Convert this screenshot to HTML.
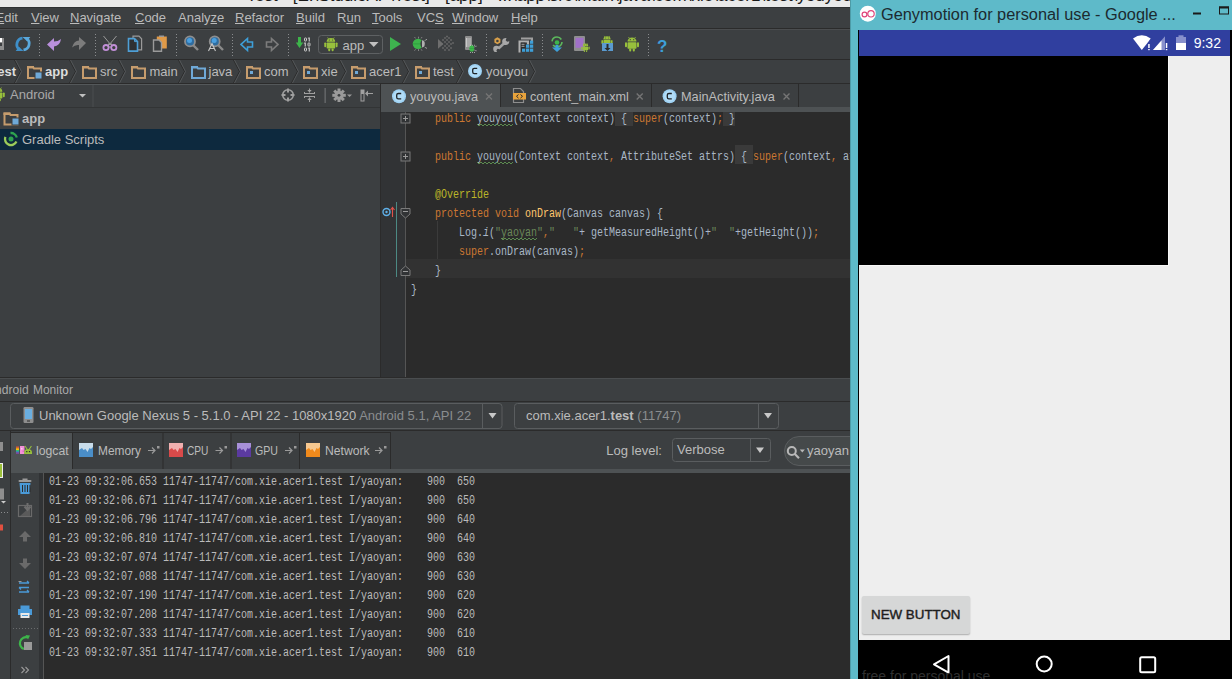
<!DOCTYPE html>
<html><head><meta charset="utf-8">
<style>
*{margin:0;padding:0;box-sizing:border-box}
html,body{width:1232px;height:679px;overflow:hidden;background:#3c3f41;font-family:"Liberation Sans",sans-serif;position:relative}
.a{position:absolute;display:block}
.t{position:absolute;white-space:pre}
.u{text-decoration:underline;text-underline-offset:1px}
</style></head><body>
<div class="a" style="left:0;top:0;width:850px;height:7px;background:#e9e9e9;overflow:hidden">
<div class="t" style="left:246.5px;top:-12.79px;font-size:17px;line-height:17px;color:#1a1a1a;font-weight:normal;font-family:'Liberation Sans',sans-serif;">Test - [E:\StudioAP\Test] - [app] - ...\app\src\main\java\com\xie\acer1\test\youyou.java - Android Studio 2.0</div>
</div>
<div class="a" style="left:0px;top:7px;width:850px;height:21px;background:#3c3f41;"></div>
<div class="a" style="left:0px;top:7px;width:850px;height:1px;background:#2f3133;"></div>
<div class="a" style="left:0px;top:28px;width:850px;height:1px;background:#2b2b2b;"></div>
<div class="a" style="left:0px;top:29px;width:850px;height:1px;background:#4b4d4f;"></div>
<div class="t" style="left:-4.5px;top:11.39px;font-size:13px;line-height:13px;color:#bbbbbb;font-weight:normal;font-family:'Liberation Sans',sans-serif;"><span class="u">E</span>dit</div>
<div class="t" style="left:31px;top:11.39px;font-size:13px;line-height:13px;color:#bbbbbb;font-weight:normal;font-family:'Liberation Sans',sans-serif;"><span class="u">V</span>iew</div>
<div class="t" style="left:70px;top:11.39px;font-size:13px;line-height:13px;color:#bbbbbb;font-weight:normal;font-family:'Liberation Sans',sans-serif;"><span class="u">N</span>avigate</div>
<div class="t" style="left:135px;top:11.39px;font-size:13px;line-height:13px;color:#bbbbbb;font-weight:normal;font-family:'Liberation Sans',sans-serif;"><span class="u">C</span>ode</div>
<div class="t" style="left:178px;top:11.39px;font-size:13px;line-height:13px;color:#bbbbbb;font-weight:normal;font-family:'Liberation Sans',sans-serif;">Analy<span class="u">z</span>e</div>
<div class="t" style="left:235px;top:11.39px;font-size:13px;line-height:13px;color:#bbbbbb;font-weight:normal;font-family:'Liberation Sans',sans-serif;"><span class="u">R</span>efactor</div>
<div class="t" style="left:296px;top:11.39px;font-size:13px;line-height:13px;color:#bbbbbb;font-weight:normal;font-family:'Liberation Sans',sans-serif;"><span class="u">B</span>uild</div>
<div class="t" style="left:337px;top:11.39px;font-size:13px;line-height:13px;color:#bbbbbb;font-weight:normal;font-family:'Liberation Sans',sans-serif;">R<span class="u">u</span>n</div>
<div class="t" style="left:372px;top:11.39px;font-size:13px;line-height:13px;color:#bbbbbb;font-weight:normal;font-family:'Liberation Sans',sans-serif;"><span class="u">T</span>ools</div>
<div class="t" style="left:417px;top:11.39px;font-size:13px;line-height:13px;color:#bbbbbb;font-weight:normal;font-family:'Liberation Sans',sans-serif;">VC<span class="u">S</span></div>
<div class="t" style="left:452px;top:11.39px;font-size:13px;line-height:13px;color:#bbbbbb;font-weight:normal;font-family:'Liberation Sans',sans-serif;"><span class="u">W</span>indow</div>
<div class="t" style="left:511px;top:11.39px;font-size:13px;line-height:13px;color:#bbbbbb;font-weight:normal;font-family:'Liberation Sans',sans-serif;"><span class="u">H</span>elp</div>
<div class="a" style="left:0px;top:30px;width:850px;height:29px;background:#3c3f41;"></div>
<div class="a" style="left:0px;top:59px;width:850px;height:1px;background:#2b2b2b;"></div>
<svg class="a" style="left:0px;top:30px;" width="850" height="29" viewBox="0 0 850 29"><rect x="0" y="8" width="4" height="12" fill="#8e8e8e"/><rect x="0" y="8" width="2" height="4" fill="#ffffff"/><rect x="0" y="13" width="2" height="3" fill="#3c3f41"/><path d="M22.5,8.2 A6.3,6.3 0 0 0 19.5,19.6" fill="none" stroke="#3e8fc9" stroke-width="2.8"/><path d="M23.5,19.8 A6.3,6.3 0 0 0 26.8,8.6" fill="none" stroke="#5aa8dc" stroke-width="2.8"/><path d="M22.5,7 h7.8 l-3.2,4.2z" fill="#5aa8dc"/><path d="M23.5,21 h-7.8 l3.2,-4.2z" fill="#3e8fc9"/><rect x="39" y="4" width="1" height="1" fill="#8a8c8e"/><rect x="39" y="7" width="1" height="1" fill="#8a8c8e"/><rect x="39" y="10" width="1" height="1" fill="#8a8c8e"/><rect x="39" y="13" width="1" height="1" fill="#8a8c8e"/><rect x="39" y="16" width="1" height="1" fill="#8a8c8e"/><rect x="39" y="19" width="1" height="1" fill="#8a8c8e"/><rect x="39" y="22" width="1" height="1" fill="#8a8c8e"/><rect x="39" y="25" width="1" height="1" fill="#8a8c8e"/><path d="M47,14.5 L54,8 L54,11.5 Q58,11.5 61,9 Q60,16 54,16.5 L54,21 Z" fill="#b98fdc"/><path d="M86,13 L79,7 L79,10.5 Q74,10.5 72,17.5 Q75,14.5 79,15 L79,20 Z" fill="#7c7c7c"/><rect x="95" y="4" width="1" height="1" fill="#8a8c8e"/><rect x="95" y="7" width="1" height="1" fill="#8a8c8e"/><rect x="95" y="10" width="1" height="1" fill="#8a8c8e"/><rect x="95" y="13" width="1" height="1" fill="#8a8c8e"/><rect x="95" y="16" width="1" height="1" fill="#8a8c8e"/><rect x="95" y="19" width="1" height="1" fill="#8a8c8e"/><rect x="95" y="22" width="1" height="1" fill="#8a8c8e"/><rect x="95" y="25" width="1" height="1" fill="#8a8c8e"/><line x1="103.5" y1="6" x2="111" y2="15" stroke="#9a9a9a" stroke-width="1"/><line x1="116.5" y1="6" x2="109" y2="15" stroke="#9a9a9a" stroke-width="1"/><rect x="108.5" y="14" width="3" height="3" fill="none" stroke="#9a9a9a" stroke-width="1"/><circle cx="106" cy="17.6" r="2.6" fill="none" stroke="#c28fd8" stroke-width="1.8"/><circle cx="113.8" cy="17.6" r="2.6" fill="none" stroke="#c28fd8" stroke-width="1.8"/><path d="M133,6.2 h6 l2.6,2.6 v11 h-8.6z" fill="#3c3f41" stroke="#9a9a9a" stroke-width="1.2"/><path d="M128.5,8.6 h6 l3,3 v9.5 h-9z" fill="#2f3133" stroke="#4e9fd6" stroke-width="1.6"/><path d="M134.5,8.6 v3 h3" fill="none" stroke="#4e9fd6" stroke-width="1"/><rect x="156.8" y="6.5" width="10" height="12" fill="#e09a48"/><rect x="159" y="5.5" width="5" height="1.5" fill="#9a9a9a"/><path d="M153.5,10 h5.5 l2.5,2.5 v8.8 h-8z" fill="#3c3f41" stroke="#9a9a9a" stroke-width="1.4"/><rect x="176" y="4" width="1" height="1" fill="#8a8c8e"/><rect x="176" y="7" width="1" height="1" fill="#8a8c8e"/><rect x="176" y="10" width="1" height="1" fill="#8a8c8e"/><rect x="176" y="13" width="1" height="1" fill="#8a8c8e"/><rect x="176" y="16" width="1" height="1" fill="#8a8c8e"/><rect x="176" y="19" width="1" height="1" fill="#8a8c8e"/><rect x="176" y="22" width="1" height="1" fill="#8a8c8e"/><rect x="176" y="25" width="1" height="1" fill="#8a8c8e"/><line x1="193" y1="15" x2="198" y2="20" stroke="#8a8a8a" stroke-width="2.4"/><circle cx="190" cy="11.4" r="5" fill="#2f6da0" stroke="#8e8e8e" stroke-width="1.8"/><circle cx="189.5" cy="10.5" r="2.5" fill="#4aa0e0"/><line x1="218" y1="15" x2="223" y2="20" stroke="#8a8a8a" stroke-width="2.4"/><circle cx="214.7" cy="11.4" r="5" fill="#2f6da0" stroke="#8e8e8e" stroke-width="1.8"/><circle cx="214.2" cy="10.5" r="2.5" fill="#4aa0e0"/><path d="M208.5,21 L212,13.5 L215.5,21 M210,18.5 h4" fill="none" stroke="#c8c8c8" stroke-width="1.1"/><rect x="232" y="4" width="1" height="1" fill="#8a8c8e"/><rect x="232" y="7" width="1" height="1" fill="#8a8c8e"/><rect x="232" y="10" width="1" height="1" fill="#8a8c8e"/><rect x="232" y="13" width="1" height="1" fill="#8a8c8e"/><rect x="232" y="16" width="1" height="1" fill="#8a8c8e"/><rect x="232" y="19" width="1" height="1" fill="#8a8c8e"/><rect x="232" y="22" width="1" height="1" fill="#8a8c8e"/><rect x="232" y="25" width="1" height="1" fill="#8a8c8e"/><path d="M241,14.4 L247.5,8.5 V12 H252.5 V17 H247.5 V20.5 Z" fill="none" stroke="#3e9fd8" stroke-width="1.6" stroke-linejoin="miter"/><path d="M278,14.4 L271.5,8.5 V12 H266.5 V17 H271.5 V20.5 Z" fill="none" stroke="#7c7c7c" stroke-width="1.6"/><rect x="288" y="4" width="1" height="1" fill="#8a8c8e"/><rect x="288" y="7" width="1" height="1" fill="#8a8c8e"/><rect x="288" y="10" width="1" height="1" fill="#8a8c8e"/><rect x="288" y="13" width="1" height="1" fill="#8a8c8e"/><rect x="288" y="16" width="1" height="1" fill="#8a8c8e"/><rect x="288" y="19" width="1" height="1" fill="#8a8c8e"/><rect x="288" y="22" width="1" height="1" fill="#8a8c8e"/><rect x="288" y="25" width="1" height="1" fill="#8a8c8e"/><rect x="298" y="7" width="3" height="6" fill="#3db54a"/><path d="M295.8,12.5 h7.4 l-3.7,5.5z" fill="#3db54a"/><rect x="304.5" y="8.0" width="2" height="3" rx="0.6" fill="none" stroke="#d0d0d0" stroke-width="1"/><rect x="308.7" y="7.5" width="1.1" height="4" fill="#d0d0d0"/><rect x="307.9" y="7.7" width="1" height="0.9" fill="#d0d0d0"/><rect x="304.7" y="12.5" width="1.1" height="4" fill="#d0d0d0"/><rect x="303.9" y="12.7" width="1" height="0.9" fill="#d0d0d0"/><rect x="308.0" y="13.0" width="2" height="3" rx="0.6" fill="none" stroke="#d0d0d0" stroke-width="1"/><rect x="304.5" y="18.0" width="2" height="3" rx="0.6" fill="none" stroke="#d0d0d0" stroke-width="1"/><rect x="308.7" y="17.5" width="1.1" height="4" fill="#d0d0d0"/><rect x="307.9" y="17.7" width="1" height="0.9" fill="#d0d0d0"/><rect x="318.5" y="5.5" width="64" height="18" rx="3" fill="#3c3f41" stroke="#5e6163" stroke-width="1"/><g transform="translate(323.8,7) scale(0.95)"><path d="M3,5 a4.5,4 0 0 1 9,0z" fill="#98c03c"/><line x1="4" y1="0.5" x2="5" y2="2" stroke="#98c03c" stroke-width="0.8"/><line x1="11" y1="0.5" x2="10" y2="2" stroke="#98c03c" stroke-width="0.8"/><circle cx="5.8" cy="3.2" r="0.6" fill="#3c3f41"/><circle cx="9.2" cy="3.2" r="0.6" fill="#3c3f41"/><rect x="3" y="5.7" width="9" height="6.5" rx="0.8" fill="#98c03c"/><rect x="0.5" y="5.7" width="2" height="5" rx="1" fill="#98c03c"/><rect x="12.5" y="5.7" width="2" height="5" rx="1" fill="#98c03c"/><rect x="4.7" y="12" width="2" height="3" rx="0.8" fill="#98c03c"/><rect x="8.3" y="12" width="2" height="3" rx="0.8" fill="#98c03c"/></g><text x="342.5" y="20" font-size="13" fill="#bbbbbb" font-family="Liberation Sans">app</text><path d="M369,12 h9.5 l-4.75,5z" fill="#c0c0c0"/><path d="M390,7 L401,14 L390,21z" fill="#3eb34f"/><ellipse cx="418" cy="13.85" rx="5.3" ry="5.2" fill="#3db54a"/><rect x="412.8" y="13.5" width="10" height="0.8" fill="#2f9a3c"/><ellipse cx="423.6" cy="13.85" rx="3.2" ry="4.2" fill="#3c3f41"/><path d="M422,10.3 a2.8,3.55 0 0 1 0,7.1 z" fill="#b0b0b0"/><path d="M424.8,10.8 q0.6,-1.2 2.2,-1.4 M424.8,16.9 q0.6,1.2 2.2,1.4" fill="none" stroke="#a0a0a0" stroke-width="1"/><path d="M414.5,7 l1,1.4 M418.5,6.7 v1.8 M422,7 l-0.8,1.4 M414.5,20.7 l1,-1.4 M418.5,21 v-1.8 M422,20.7 l-0.8,-1.4" fill="none" stroke="#8a8a8a" stroke-width="0.9"/><path d="M438,9 L443.5,14 L438,18.7z" fill="#6e6e6e"/><rect x="442.25" y="9.25" width="1.5" height="1.5" fill="#707070"/><rect x="444.25" y="7.25" width="1.5" height="1.5" fill="#707070"/><rect x="446.25" y="9.25" width="1.5" height="1.5" fill="#707070"/><rect x="444.25" y="11.25" width="1.5" height="1.5" fill="#707070"/><rect x="446.25" y="13.25" width="1.5" height="1.5" fill="#707070"/><rect x="448.25" y="11.25" width="1.5" height="1.5" fill="#707070"/><rect x="448.25" y="7.25" width="1.5" height="1.5" fill="#707070"/><rect x="450.25" y="9.25" width="1.5" height="1.5" fill="#707070"/><rect x="450.25" y="13.25" width="1.5" height="1.5" fill="#707070"/><rect x="448.25" y="15.25" width="1.5" height="1.5" fill="#707070"/><rect x="446.25" y="17.25" width="1.5" height="1.5" fill="#707070"/><rect x="444.25" y="15.25" width="1.5" height="1.5" fill="#707070"/><rect x="442.25" y="17.25" width="1.5" height="1.5" fill="#707070"/><rect x="444.25" y="19.25" width="1.5" height="1.5" fill="#707070"/><rect x="448.25" y="19.25" width="1.5" height="1.5" fill="#707070"/><rect x="450.25" y="17.25" width="1.5" height="1.5" fill="#707070"/><rect x="452.25" y="12.25" width="1.5" height="1.5" fill="#707070"/><rect x="446.25" y="5.75" width="1.5" height="1.5" fill="#707070"/><rect x="441.25" y="13.25" width="1.5" height="1.5" fill="#707070"/><rect x="465" y="6" width="7" height="14" rx="1" fill="#8e8e8e"/><rect x="466" y="8" width="5" height="9" fill="#c8c8c8"/><rect x="467" y="8" width="4" height="9" fill="#a8a8a8"/><ellipse cx="471.8" cy="18.5" rx="2.4" ry="3.3" fill="#3db54a"/><rect x="469.5" y="18.3" width="4.5" height="0.6" fill="#2f9a3c"/><path d="M474.3,17 q1,-0.8 2.3,-0.8 M474.3,20 q1,0.8 2.3,0.8" fill="none" stroke="#b0b0b0" stroke-width="0.8"/><rect x="470" y="14.8" width="0.8" height="0.8" fill="#ddd"/><rect x="470" y="22" width="0.8" height="0.8" fill="#ddd"/><rect x="472" y="14.8" width="0.8" height="0.8" fill="#ddd"/><rect x="472" y="22" width="0.8" height="0.8" fill="#ddd"/><rect x="474" y="14.8" width="0.8" height="0.8" fill="#ddd"/><rect x="474" y="22" width="0.8" height="0.8" fill="#ddd"/><rect x="486" y="4" width="1" height="1" fill="#8a8c8e"/><rect x="486" y="7" width="1" height="1" fill="#8a8c8e"/><rect x="486" y="10" width="1" height="1" fill="#8a8c8e"/><rect x="486" y="13" width="1" height="1" fill="#8a8c8e"/><rect x="486" y="16" width="1" height="1" fill="#8a8c8e"/><rect x="486" y="19" width="1" height="1" fill="#8a8c8e"/><rect x="486" y="22" width="1" height="1" fill="#8a8c8e"/><rect x="486" y="25" width="1" height="1" fill="#8a8c8e"/><path d="M497.4,7.3 l3,1.75 v3.5 l-3,1.75 l-3,-1.75 v-3.5z" fill="#d9a04a"/><circle cx="497.4" cy="11" r="1.3" fill="#3c3f41"/><line x1="498.5" y1="18.5" x2="505.5" y2="12" stroke="#a0a0a0" stroke-width="2.4"/><path d="M506.5,8 a3.6,3.6 0 1 0 2.8,3.2 l-2.2,0.6 l-1.4,-1.6 z" fill="#a8a8a8"/><path d="M497,22 a3.2,3.2 0 1 1 2.6,-3 l-2,-0.3 l-1.2,1.6 z" fill="#a8a8a8"/><g transform="translate(0,1.6)"><path d="M521,7 h11 v3.5" fill="none" stroke="#a0a0a0" stroke-width="2"/><path d="M519.5,21 v-11 h8.5 v3" fill="none" stroke="#b0b0b0" stroke-width="2"/><rect x="521" y="11" width="4.5" height="9" fill="#2b2b2b"/><rect x="521.5" y="12.2" width="3" height="0.9" fill="#b8b8b8"/><rect x="521.5" y="14.2" width="3" height="0.9" fill="#b8b8b8"/><rect x="530" y="9" width="3.2" height="3.2" fill="#3e9fd8"/><rect x="526" y="13" width="3.2" height="3.2" fill="#3e9fd8"/><rect x="530" y="13" width="3.2" height="3.2" fill="#3e9fd8"/><rect x="522" y="17" width="3.2" height="3.2" fill="#3e9fd8"/><rect x="526" y="17" width="3.2" height="3.2" fill="#3e9fd8"/><rect x="530" y="17" width="3.2" height="3.2" fill="#3e9fd8"/></g><rect x="542" y="4" width="1" height="1" fill="#8a8c8e"/><rect x="542" y="7" width="1" height="1" fill="#8a8c8e"/><rect x="542" y="10" width="1" height="1" fill="#8a8c8e"/><rect x="542" y="13" width="1" height="1" fill="#8a8c8e"/><rect x="542" y="16" width="1" height="1" fill="#8a8c8e"/><rect x="542" y="19" width="1" height="1" fill="#8a8c8e"/><rect x="542" y="22" width="1" height="1" fill="#8a8c8e"/><rect x="542" y="25" width="1" height="1" fill="#8a8c8e"/><circle cx="557" cy="12" r="5" fill="none" stroke="#5cb85c" stroke-width="1.6" stroke-dasharray="12 4"/><circle cx="557" cy="12.5" r="2.3" fill="#3db54a"/><rect x="555.5" y="15" width="3" height="3" fill="#3e9fd8"/><path d="M552,17.5 h10 l-5,4.5z" fill="#3e9fd8"/><rect x="574" y="6" width="11" height="15" rx="1" fill="#8e8e8e"/><rect x="575.5" y="7.8" width="8" height="10" fill="#a070c8"/><g transform="translate(581,13) scale(0.6)"><path d="M3,5 a4.5,4 0 0 1 9,0z" fill="#98c03c"/><line x1="4" y1="0.5" x2="5" y2="2" stroke="#98c03c" stroke-width="0.8"/><line x1="11" y1="0.5" x2="10" y2="2" stroke="#98c03c" stroke-width="0.8"/><circle cx="5.8" cy="3.2" r="0.6" fill="#3c3f41"/><circle cx="9.2" cy="3.2" r="0.6" fill="#3c3f41"/><rect x="3" y="5.7" width="9" height="6.5" rx="0.8" fill="#98c03c"/><rect x="0.5" y="5.7" width="2" height="5" rx="1" fill="#98c03c"/><rect x="12.5" y="5.7" width="2" height="5" rx="1" fill="#98c03c"/><rect x="4.7" y="12" width="2" height="3" rx="0.8" fill="#98c03c"/><rect x="8.3" y="12" width="2" height="3" rx="0.8" fill="#98c03c"/></g><g transform="translate(601,5.5) scale(0.8)"><path d="M3,5 a4.5,4 0 0 1 9,0z" fill="#98c03c"/><line x1="4" y1="0.5" x2="5" y2="2" stroke="#98c03c" stroke-width="0.8"/><line x1="11" y1="0.5" x2="10" y2="2" stroke="#98c03c" stroke-width="0.8"/><circle cx="5.8" cy="3.2" r="0.6" fill="#3c3f41"/><circle cx="9.2" cy="3.2" r="0.6" fill="#3c3f41"/><rect x="3" y="5.7" width="9" height="6.5" rx="0.8" fill="#98c03c"/><rect x="0.5" y="5.7" width="2" height="5" rx="1" fill="#98c03c"/><rect x="12.5" y="5.7" width="2" height="5" rx="1" fill="#98c03c"/><rect x="4.7" y="12" width="2" height="3" rx="0.8" fill="#98c03c"/><rect x="8.3" y="12" width="2" height="3" rx="0.8" fill="#98c03c"/></g><rect x="602" y="13" width="11" height="8" fill="#5a9ad0"/><path d="M606.5,14 v4 h-2 l3,3 l3,-3 h-2 v-4z" fill="#2b2b2b"/><g transform="translate(624.5,6.5) scale(1.0)"><path d="M3,5 a4.5,4 0 0 1 9,0z" fill="#98c03c"/><line x1="4" y1="0.5" x2="5" y2="2" stroke="#98c03c" stroke-width="0.8"/><line x1="11" y1="0.5" x2="10" y2="2" stroke="#98c03c" stroke-width="0.8"/><circle cx="5.8" cy="3.2" r="0.6" fill="#3c3f41"/><circle cx="9.2" cy="3.2" r="0.6" fill="#3c3f41"/><rect x="3" y="5.7" width="9" height="6.5" rx="0.8" fill="#98c03c"/><rect x="0.5" y="5.7" width="2" height="5" rx="1" fill="#98c03c"/><rect x="12.5" y="5.7" width="2" height="5" rx="1" fill="#98c03c"/><rect x="4.7" y="12" width="2" height="3" rx="0.8" fill="#98c03c"/><rect x="8.3" y="12" width="2" height="3" rx="0.8" fill="#98c03c"/></g><rect x="648" y="4" width="1" height="1" fill="#8a8c8e"/><rect x="648" y="7" width="1" height="1" fill="#8a8c8e"/><rect x="648" y="10" width="1" height="1" fill="#8a8c8e"/><rect x="648" y="13" width="1" height="1" fill="#8a8c8e"/><rect x="648" y="16" width="1" height="1" fill="#8a8c8e"/><rect x="648" y="19" width="1" height="1" fill="#8a8c8e"/><rect x="648" y="22" width="1" height="1" fill="#8a8c8e"/><rect x="648" y="25" width="1" height="1" fill="#8a8c8e"/><text x="657" y="21.5" font-size="17" font-weight="bold" fill="#3e9fd8" font-family="Liberation Sans">?</text></svg>
<div class="a" style="left:0px;top:60px;width:850px;height:23px;background:#3c3f41;"></div>
<div class="a" style="left:0px;top:83px;width:850px;height:1px;background:#2b2b2b;"></div>
<div class="t" style="left:-7px;top:64.99px;font-size:13px;line-height:13px;color:#dddddd;font-weight:bold;font-family:'Liberation Sans',sans-serif;">test</div>
<svg class="a" style="left:14px;top:60px;" width="8" height="23" viewBox="0 0 8 23"><polyline points="0.5,0 6.5,11.5 0.5,23" fill="none" stroke="#2b2b2b" stroke-width="1"/><polyline points="1.5,0 7.5,11.5 1.5,23" fill="none" stroke="#55585a" stroke-width="1"/></svg>
<svg class="a" style="left:27px;top:65px;" width="16" height="14" viewBox="0 0 16 14"><path d="M1,2 h5 l1,1.5 h7 v9.5 h-13 z" fill="none" stroke="#c69c6d" stroke-width="2"/><rect x="0" y="1" width="7" height="2.5" fill="#c69c6d"/><rect x="8" y="7" width="7" height="7" fill="#6fa9d8" stroke="#3c3f41" stroke-width="1"/></svg>
<div class="t" style="left:45px;top:64.99px;font-size:13px;line-height:13px;color:#dddddd;font-weight:bold;font-family:'Liberation Sans',sans-serif;">app</div>
<svg class="a" style="left:69px;top:60px;" width="8" height="23" viewBox="0 0 8 23"><polyline points="0.5,0 6.5,11.5 0.5,23" fill="none" stroke="#2b2b2b" stroke-width="1"/><polyline points="1.5,0 7.5,11.5 1.5,23" fill="none" stroke="#55585a" stroke-width="1"/></svg>
<svg class="a" style="left:82px;top:65px;" width="16" height="14" viewBox="0 0 16 14"><path d="M1,2 h5 l1,1.5 h7 v9.5 h-13 z" fill="none" stroke="#c69c6d" stroke-width="2"/><rect x="0" y="1" width="7" height="2.5" fill="#c69c6d"/></svg>
<div class="t" style="left:100px;top:64.99px;font-size:13px;line-height:13px;color:#bbbbbb;font-weight:normal;font-family:'Liberation Sans',sans-serif;">src</div>
<svg class="a" style="left:118px;top:60px;" width="8" height="23" viewBox="0 0 8 23"><polyline points="0.5,0 6.5,11.5 0.5,23" fill="none" stroke="#2b2b2b" stroke-width="1"/><polyline points="1.5,0 7.5,11.5 1.5,23" fill="none" stroke="#55585a" stroke-width="1"/></svg>
<svg class="a" style="left:131px;top:65px;" width="16" height="14" viewBox="0 0 16 14"><path d="M1,2 h5 l1,1.5 h7 v9.5 h-13 z" fill="none" stroke="#c69c6d" stroke-width="2"/><rect x="0" y="1" width="7" height="2.5" fill="#c69c6d"/></svg>
<div class="t" style="left:149.5px;top:64.99px;font-size:13px;line-height:13px;color:#bbbbbb;font-weight:normal;font-family:'Liberation Sans',sans-serif;">main</div>
<svg class="a" style="left:178px;top:60px;" width="8" height="23" viewBox="0 0 8 23"><polyline points="0.5,0 6.5,11.5 0.5,23" fill="none" stroke="#2b2b2b" stroke-width="1"/><polyline points="1.5,0 7.5,11.5 1.5,23" fill="none" stroke="#55585a" stroke-width="1"/></svg>
<svg class="a" style="left:191px;top:65px;" width="16" height="14" viewBox="0 0 16 14"><path d="M1,2 h5 l1,1.5 h7 v9.5 h-13 z" fill="none" stroke="#6fa9d8" stroke-width="2"/><rect x="0" y="1" width="7" height="2.5" fill="#6fa9d8"/></svg>
<div class="t" style="left:208.5px;top:64.99px;font-size:13px;line-height:13px;color:#bbbbbb;font-weight:normal;font-family:'Liberation Sans',sans-serif;">java</div>
<svg class="a" style="left:233px;top:60px;" width="8" height="23" viewBox="0 0 8 23"><polyline points="0.5,0 6.5,11.5 0.5,23" fill="none" stroke="#2b2b2b" stroke-width="1"/><polyline points="1.5,0 7.5,11.5 1.5,23" fill="none" stroke="#55585a" stroke-width="1"/></svg>
<svg class="a" style="left:246px;top:65px;" width="16" height="14" viewBox="0 0 16 14"><path d="M1,2 h5 l1,1.5 h7 v9.5 h-13 z" fill="none" stroke="#c69c6d" stroke-width="2"/><rect x="0" y="1" width="7" height="2.5" fill="#c69c6d"/><rect x="4" y="6" width="3" height="3" fill="#6fa9d8"/></svg>
<div class="t" style="left:264px;top:64.99px;font-size:13px;line-height:13px;color:#bbbbbb;font-weight:normal;font-family:'Liberation Sans',sans-serif;">com</div>
<svg class="a" style="left:291px;top:60px;" width="8" height="23" viewBox="0 0 8 23"><polyline points="0.5,0 6.5,11.5 0.5,23" fill="none" stroke="#2b2b2b" stroke-width="1"/><polyline points="1.5,0 7.5,11.5 1.5,23" fill="none" stroke="#55585a" stroke-width="1"/></svg>
<svg class="a" style="left:303px;top:65px;" width="16" height="14" viewBox="0 0 16 14"><path d="M1,2 h5 l1,1.5 h7 v9.5 h-13 z" fill="none" stroke="#c69c6d" stroke-width="2"/><rect x="0" y="1" width="7" height="2.5" fill="#c69c6d"/><rect x="4" y="6" width="3" height="3" fill="#6fa9d8"/></svg>
<div class="t" style="left:321px;top:64.99px;font-size:13px;line-height:13px;color:#bbbbbb;font-weight:normal;font-family:'Liberation Sans',sans-serif;">xie</div>
<svg class="a" style="left:339px;top:60px;" width="8" height="23" viewBox="0 0 8 23"><polyline points="0.5,0 6.5,11.5 0.5,23" fill="none" stroke="#2b2b2b" stroke-width="1"/><polyline points="1.5,0 7.5,11.5 1.5,23" fill="none" stroke="#55585a" stroke-width="1"/></svg>
<svg class="a" style="left:351px;top:65px;" width="16" height="14" viewBox="0 0 16 14"><path d="M1,2 h5 l1,1.5 h7 v9.5 h-13 z" fill="none" stroke="#c69c6d" stroke-width="2"/><rect x="0" y="1" width="7" height="2.5" fill="#c69c6d"/><rect x="4" y="6" width="3" height="3" fill="#6fa9d8"/></svg>
<div class="t" style="left:369px;top:64.99px;font-size:13px;line-height:13px;color:#bbbbbb;font-weight:normal;font-family:'Liberation Sans',sans-serif;">acer1</div>
<svg class="a" style="left:402px;top:60px;" width="8" height="23" viewBox="0 0 8 23"><polyline points="0.5,0 6.5,11.5 0.5,23" fill="none" stroke="#2b2b2b" stroke-width="1"/><polyline points="1.5,0 7.5,11.5 1.5,23" fill="none" stroke="#55585a" stroke-width="1"/></svg>
<svg class="a" style="left:415px;top:65px;" width="16" height="14" viewBox="0 0 16 14"><path d="M1,2 h5 l1,1.5 h7 v9.5 h-13 z" fill="none" stroke="#c69c6d" stroke-width="2"/><rect x="0" y="1" width="7" height="2.5" fill="#c69c6d"/><rect x="4" y="6" width="3" height="3" fill="#6fa9d8"/></svg>
<div class="t" style="left:433px;top:64.99px;font-size:13px;line-height:13px;color:#bbbbbb;font-weight:normal;font-family:'Liberation Sans',sans-serif;">test</div>
<svg class="a" style="left:456px;top:60px;" width="8" height="23" viewBox="0 0 8 23"><polyline points="0.5,0 6.5,11.5 0.5,23" fill="none" stroke="#2b2b2b" stroke-width="1"/><polyline points="1.5,0 7.5,11.5 1.5,23" fill="none" stroke="#55585a" stroke-width="1"/></svg>
<svg class="a" style="left:468px;top:64px;" width="14" height="14" viewBox="0 0 14 14"><circle cx="7" cy="7" r="7" fill="#9ed2f4"/><circle cx="7" cy="7" r="5.5" fill="#b2ddf8"/><path d="M9.2,4.3 h-2.9 q-1.6,0 -1.6,1.6 v2.2 q0,1.6 1.6,1.6 h2.9" fill="none" stroke="#1e2428" stroke-width="1.3"/></svg>
<div class="t" style="left:486px;top:64.99px;font-size:13px;line-height:13px;color:#bbbbbb;font-weight:normal;font-family:'Liberation Sans',sans-serif;">youyou</div>
<svg class="a" style="left:528px;top:60px;" width="8" height="23" viewBox="0 0 8 23"><polyline points="0.5,0 6.5,11.5 0.5,23" fill="none" stroke="#2b2b2b" stroke-width="1"/><polyline points="1.5,0 7.5,11.5 1.5,23" fill="none" stroke="#55585a" stroke-width="1"/></svg>
<div class="a" style="left:0px;top:84px;width:380px;height:294px;background:#3c3f41;"></div>
<div class="a" style="left:0px;top:84px;width:380px;height:1px;background:#54585a;"></div>
<div class="a" style="left:0px;top:107px;width:380px;height:1px;background:#323435;"></div>
<div class="a" style="left:0px;top:129px;width:380px;height:21px;background:#0d293e;"></div>
<div class="a" style="left:380px;top:84px;width:1px;height:294px;background:#2b2b2b;"></div>
<div class="t" style="left:10px;top:88.49px;font-size:13px;line-height:13px;color:#a9a9a9;font-weight:normal;font-family:'Liberation Sans',sans-serif;">Android</div>
<div class="t" style="left:22px;top:111.99px;font-size:13px;line-height:13px;color:#bbbbbb;font-weight:bold;font-family:'Liberation Sans',sans-serif;">app</div>
<div class="t" style="left:22px;top:132.99px;font-size:13px;line-height:13px;color:#bbbbbb;font-weight:normal;font-family:'Liberation Sans',sans-serif;">Gradle Scripts</div>
<svg class="a" style="left:0;top:0" width="850" height="160" viewBox="0 0 850 160"><g transform="translate(-9,87) scale(0.95)"><path d="M3,5 a4.5,4 0 0 1 9,0z" fill="#98c03c"/><line x1="4" y1="0.5" x2="5" y2="2" stroke="#98c03c" stroke-width="0.8"/><line x1="11" y1="0.5" x2="10" y2="2" stroke="#98c03c" stroke-width="0.8"/><circle cx="5.8" cy="3.2" r="0.6" fill="#3c3f41"/><circle cx="9.2" cy="3.2" r="0.6" fill="#3c3f41"/><rect x="3" y="5.7" width="9" height="6.5" rx="0.8" fill="#98c03c"/><rect x="0.5" y="5.7" width="2" height="5" rx="1" fill="#98c03c"/><rect x="12.5" y="5.7" width="2" height="5" rx="1" fill="#98c03c"/><rect x="4.7" y="12" width="2" height="3" rx="0.8" fill="#98c03c"/><rect x="8.3" y="12" width="2" height="3" rx="0.8" fill="#98c03c"/></g><path d="M79,94 h7 l-3.5,3.5z" fill="#c0c0c0"/><rect x="92.5" y="85" width="1" height="22" fill="#4b4e50"/><circle cx="288" cy="95" r="5.3" fill="none" stroke="#a0a0a0" stroke-width="1.6"/><rect x="287" y="88.5" width="2" height="4" fill="#a0a0a0"/><rect x="287" y="97.5" width="2" height="4" fill="#a0a0a0"/><rect x="281.5" y="94" width="4" height="2" fill="#a0a0a0"/><rect x="290.5" y="94" width="4" height="2" fill="#a0a0a0"/><rect x="287" y="94" width="2" height="2" fill="#3c3f41"/><rect x="304" y="93" width="11" height="1" fill="#a0a0a0"/><rect x="304" y="96" width="11" height="1" fill="#a0a0a0"/><rect x="309" y="88.5" width="1" height="4" fill="#a0a0a0"/><path d="M307.3,90 h4.4 l-2.2,2.5z" fill="#a0a0a0"/><rect x="309" y="97.5" width="1" height="4.5" fill="#a0a0a0"/><path d="M307.3,100 h4.4 l-2.2,-2.5z" fill="#a0a0a0"/><rect x="304" y="92" width="1" height="2" fill="#a0a0a0"/><rect x="314" y="92" width="1" height="2" fill="#a0a0a0"/><rect x="304" y="96" width="1" height="2" fill="#a0a0a0"/><rect x="314" y="96" width="1" height="2" fill="#a0a0a0"/><rect x="324.5" y="88" width="1.3" height="15" fill="#6a6d6f"/><circle cx="339" cy="95.3" r="4.5" fill="#9a9a9a"/><rect x="337.5" y="88.5" width="3" height="13.5" fill="#9a9a9a" transform="rotate(0 339 95.3)"/><rect x="337.5" y="88.5" width="3" height="13.5" fill="#9a9a9a" transform="rotate(45 339 95.3)"/><rect x="337.5" y="88.5" width="3" height="13.5" fill="#9a9a9a" transform="rotate(90 339 95.3)"/><rect x="337.5" y="88.5" width="3" height="13.5" fill="#9a9a9a" transform="rotate(135 339 95.3)"/><circle cx="339" cy="95.3" r="1.4" fill="#3c3f41"/><path d="M347,94.5 h5 l-2.5,2.5z" fill="#9a9a9a"/><rect x="361" y="90" width="3" height="11" fill="none" stroke="#a0a0a0" stroke-width="1"/><rect x="361" y="90" width="3" height="4" fill="#a0a0a0"/><rect x="366" y="93" width="7" height="1" fill="#a0a0a0"/><path d="M365,93.5 l3,-3 v6z" fill="#a0a0a0"/><path d="M4.5,113.5 h5 l1,1.5 h7 v9.5 h-13 z" fill="none" stroke="#c69c6d" stroke-width="2"/><rect x="3.5" y="112.5" width="7" height="2.5" fill="#c69c6d"/><rect x="12" y="118" width="7" height="7" fill="#6fa9d8" stroke="#3c3f41" stroke-width="1"/><path d="M5.36,136.95 A6,6 0 0 0 16.44,141.54" fill="none" stroke="#9ccc5a" stroke-width="2.3"/><path d="M10.48,133.02 A6,6 0 0 1 16.8,137.45" fill="none" stroke="#2fa44f" stroke-width="2.3"/><circle cx="11" cy="139" r="2.5" fill="#2fa44f"/></svg>
<div class="a" style="left:381px;top:84px;width:469px;height:23px;background:#3c3f41;"></div>
<div class="a" style="left:381px;top:84px;width:119px;height:23px;background:#4e5254;"></div>
<div class="a" style="left:381px;top:107px;width:469px;height:5px;background:#4e5254;"></div>
<div class="a" style="left:381px;top:112px;width:25px;height:266px;background:#313335;"></div>
<div class="a" style="left:406px;top:112px;width:444px;height:266px;background:#2b2b2b;"></div>
<div class="a" style="left:406px;top:259px;width:444px;height:19px;background:#323232;"></div>
<div class="a" style="left:405px;top:112px;width:1px;height:266px;background:#555555;"></div>
<div class="a" style="left:500px;top:84px;width:1px;height:23px;background:#2b2b2b;"></div>
<div class="a" style="left:651px;top:84px;width:1px;height:23px;background:#2b2b2b;"></div>
<div class="a" style="left:798px;top:84px;width:1px;height:23px;background:#2b2b2b;"></div>
<div class="t" style="left:410px;top:90.19px;font-size:13px;line-height:13px;color:#bbbbbb;font-weight:normal;font-family:'Liberation Sans',sans-serif;transform:scaleX(0.98);transform-origin:0 0;">youyou.java</div>
<div class="t" style="left:530px;top:90.19px;font-size:13px;line-height:13px;color:#bbbbbb;font-weight:normal;font-family:'Liberation Sans',sans-serif;transform:scaleX(0.97);transform-origin:0 0;">content_main.xml</div>
<div class="t" style="left:681px;top:90.19px;font-size:13px;line-height:13px;color:#bbbbbb;font-weight:normal;font-family:'Liberation Sans',sans-serif;transform:scaleX(0.98);transform-origin:0 0;">MainActivity.java</div>
<svg class="a" style="left:0;top:0" width="850" height="380" viewBox="0 0 850 380"><circle cx="399" cy="96.2" r="7" fill="#9ed2f4"/><circle cx="399" cy="96.2" r="5.5" fill="#b2ddf8"/><path d="M401.2,93.5 h-2.9 q-1.6,0 -1.6,1.6 v2.2 q0,1.6 1.6,1.6 h2.9" fill="none" stroke="#1e2428" stroke-width="1.3"/><circle cx="669.6" cy="96.2" r="7" fill="#9ed2f4"/><circle cx="669.6" cy="96.2" r="5.5" fill="#b2ddf8"/><path d="M671.8000000000001,93.5 h-2.9 q-1.6,0 -1.6,1.6 v2.2 q0,1.6 1.6,1.6 h2.9" fill="none" stroke="#1e2428" stroke-width="1.3"/><path d="M486,93.5 L492,99.5 M492,93.5 L486,99.5" stroke="#757575" stroke-width="1.4"/><path d="M636.7,93.5 L642.7,99.5 M642.7,93.5 L636.7,99.5" stroke="#757575" stroke-width="1.4"/><path d="M783.5,93.5 L789.5,99.5 M789.5,93.5 L783.5,99.5" stroke="#757575" stroke-width="1.4"/><path d="M513.5,88.5 h7 l3,3 v11 h-10z" fill="none" stroke="#8e8e8e" stroke-width="1.2"/><rect x="513" y="93" width="13" height="6.5" fill="#e8a33c"/><path d="M518.5,94.5 l-2,1.8 l2,1.8 M520.5,94.5 l2,1.8 l-2,1.8" fill="none" stroke="#2b2b2b" stroke-width="1"/><rect x="405" y="112" width="1" height="266" fill="#555555"/><rect x="401.0" y="114.0" width="9" height="9" fill="#313335" stroke="#7a7a7a" stroke-width="1"/><path d="M403.0,118.5 h5 M405.5,116.0 v5" stroke="#9a9a9a" stroke-width="1"/><rect x="401.0" y="152.0" width="9" height="9" fill="#313335" stroke="#7a7a7a" stroke-width="1"/><path d="M403.0,156.5 h5 M405.5,154.0 v5" stroke="#9a9a9a" stroke-width="1"/><path d="M401,208.5 h9 v5.5 l-4.5,4 l-4.5,-4z" fill="#313335" stroke="#7a7a7a" stroke-width="1"/><path d="M403,211.5 h5" stroke="#9a9a9a" stroke-width="1"/><path d="M401,275.5 h9 v-5.5 l-4.5,-4 l-4.5,4z" fill="#313335" stroke="#7a7a7a" stroke-width="1"/><path d="M403,271.5 h5" stroke="#9a9a9a" stroke-width="1"/><circle cx="386.5" cy="212" r="3.5" fill="none" stroke="#5fb0e8" stroke-width="1.4"/><circle cx="386.5" cy="212" r="1.2" fill="#5fb0e8"/><path d="M392.5,217 v-9 M390.5,210 l2,-2.5 l2,2.5" fill="none" stroke="#e0524a" stroke-width="1.1"/></svg>
<div class="a" style="left:615px;top:112px;width:18px;height:14px;background:#3a3a3a;"></div>
<div class="a" style="left:723px;top:112px;width:12px;height:14px;background:#3a3a3a;"></div>
<div class="a" style="left:735px;top:145px;width:18px;height:19px;background:#3a3a3a;"></div>
<div class="t" style="left:411px;top:113.41px;font-size:12px;line-height:12px;font-family:'Liberation Mono',monospace;color:#a9b7c6;transform:scaleX(0.8333);transform-origin:0 0;">    <span style="color:#cc7832">public</span> youyou(Context context) { <span style="color:#cc7832">super</span>(context)<span style="color:#cc7832">;</span> }</div>
<div class="t" style="left:411px;top:151.41px;font-size:12px;line-height:12px;font-family:'Liberation Mono',monospace;color:#a9b7c6;transform:scaleX(0.8333);transform-origin:0 0;">    <span style="color:#cc7832">public</span> youyou(Context context<span style="color:#cc7832">,</span> AttributeSet attrs) { <span style="color:#cc7832">super</span>(context<span style="color:#cc7832">,</span> attrs)<span style="color:#cc7832">;</span> }</div>
<div class="t" style="left:411px;top:189.41px;font-size:12px;line-height:12px;font-family:'Liberation Mono',monospace;color:#a9b7c6;transform:scaleX(0.8333);transform-origin:0 0;">    <span style="color:#bbb529">@Override</span></div>
<div class="t" style="left:411px;top:208.41px;font-size:12px;line-height:12px;font-family:'Liberation Mono',monospace;color:#a9b7c6;transform:scaleX(0.8333);transform-origin:0 0;">    <span style="color:#cc7832">protected void</span> <span style="color:#ffc66d">onDraw</span>(Canvas canvas) {</div>
<div class="t" style="left:411px;top:227.41px;font-size:12px;line-height:12px;font-family:'Liberation Mono',monospace;color:#a9b7c6;transform:scaleX(0.8333);transform-origin:0 0;">        Log.<i>i</i>(<span style="color:#6a8759">"yaoyan"</span><span style="color:#cc7832">,</span><span style="color:#6a8759">"   "</span>+ getMeasuredHeight()+<span style="color:#6a8759">"  "</span>+getHeight())<span style="color:#cc7832">;</span></div>
<div class="t" style="left:411px;top:246.41px;font-size:12px;line-height:12px;font-family:'Liberation Mono',monospace;color:#a9b7c6;transform:scaleX(0.8333);transform-origin:0 0;">        <span style="color:#cc7832">super</span>.onDraw(canvas)<span style="color:#cc7832">;</span></div>
<div class="t" style="left:411px;top:265.41px;font-size:12px;line-height:12px;font-family:'Liberation Mono',monospace;color:#a9b7c6;transform:scaleX(0.8333);transform-origin:0 0;">    }</div>
<div class="t" style="left:411px;top:284.41px;font-size:12px;line-height:12px;font-family:'Liberation Mono',monospace;color:#a9b7c6;transform:scaleX(0.8333);transform-origin:0 0;">}</div>
<svg class="a" style="left:477px;top:123px;" width="37" height="4" viewBox="0 0 37 4"><polyline points="0,1 2,3 4,1 6,3 8,1 10,3 12,1 14,3 16,1 18,3 20,1 22,3 24,1 26,3 28,1 30,3 32,1 34,3 36,1" fill="none" stroke="#629755" stroke-width="0.9"/></svg>
<svg class="a" style="left:477px;top:161px;" width="37" height="4" viewBox="0 0 37 4"><polyline points="0,1 2,3 4,1 6,3 8,1 10,3 12,1 14,3 16,1 18,3 20,1 22,3 24,1 26,3 28,1 30,3 32,1 34,3 36,1" fill="none" stroke="#629755" stroke-width="0.9"/></svg>
<svg class="a" style="left:501px;top:237px;" width="37" height="4" viewBox="0 0 37 4"><polyline points="0,1 2,3 4,1 6,3 8,1 10,3 12,1 14,3 16,1 18,3 20,1 22,3 24,1 26,3 28,1 30,3 32,1 34,3 36,1" fill="none" stroke="#629755" stroke-width="0.9"/></svg>
<div class="a" style="left:437px;top:221px;width:1px;height:38px;background:#3b3b3b;"></div>
<div class="a" style="left:396px;top:202px;width:1px;height:75px;background:#4c8a84;"></div>
<div class="a" style="left:0px;top:377px;width:850px;height:1px;background:#2b2b2b;"></div>
<div class="a" style="left:0px;top:378px;width:850px;height:23px;background:#3c3f41;"></div>
<div class="a" style="left:0px;top:378px;width:850px;height:1px;background:#4a4d4f;"></div>
<div class="a" style="left:0px;top:401px;width:850px;height:1px;background:#2b2b2b;"></div>
<div class="a" style="left:0px;top:402px;width:850px;height:29px;background:#3c3f41;"></div>
<div class="a" style="left:0px;top:430px;width:850px;height:1px;background:#2b2b2b;"></div>
<div class="a" style="left:0px;top:431px;width:850px;height:39px;background:#3c3f41;"></div>
<div class="a" style="left:11px;top:433px;width:61px;height:37px;background:#4e5254;"></div>
<div class="a" style="left:0px;top:469px;width:850px;height:4px;background:#4e5254;"></div>
<div class="a" style="left:0px;top:473px;width:850px;height:206px;background:#2b2b2b;"></div>
<div class="a" style="left:0px;top:431px;width:10px;height:248px;background:#3c3f41;"></div>
<div class="a" style="left:10px;top:431px;width:1px;height:248px;background:#2b2b2b;"></div>
<div class="a" style="left:11px;top:473px;width:28px;height:206px;background:#3c3f41;"></div>
<div class="a" style="left:39px;top:473px;width:4px;height:206px;background:#313335;"></div>
<div class="a" style="left:43px;top:473px;width:1px;height:206px;background:#555555;"></div>
<div class="t" style="left:-13.2px;top:383.49px;font-size:13px;line-height:13px;color:#a9a9a9;font-weight:normal;font-family:'Liberation Sans',sans-serif;transform:scaleX(0.93);transform-origin:0 0;">Android</div>
<div class="t" style="left:33px;top:383.49px;font-size:13px;line-height:13px;color:#a9a9a9;font-weight:normal;font-family:'Liberation Sans',sans-serif;transform:scaleX(0.92);transform-origin:0 0;">Monitor</div>
<svg class="a" style="left:0;top:0" width="850" height="679" viewBox="0 0 850 679"><rect x="10.5" y="403.5" width="491.5" height="25" rx="3" fill="#3c3f41" stroke="#5a5d5f" stroke-width="1"/><line x1="482.5" y1="404" x2="482.5" y2="428" stroke="#5a5d5f" stroke-width="1"/><path d="M488.5,413 h8 l-4,5.5z" fill="#c8c8c8"/><rect x="23.5" y="407" width="10" height="16" rx="1.2" fill="#8e8e8e"/><rect x="25" y="409" width="7" height="10" fill="#6aaee0"/><rect x="27" y="420.5" width="3" height="1" fill="#2b2b2b"/><rect x="514.5" y="403.5" width="264" height="25" rx="3" fill="#3c3f41" stroke="#5a5d5f" stroke-width="1"/><line x1="758.5" y1="404" x2="758.5" y2="428" stroke="#5a5d5f" stroke-width="1"/><path d="M764,413 h8 l-4,5.5z" fill="#c8c8c8"/><rect x="672.5" y="438.5" width="98" height="23" rx="3" fill="#3c3f41" stroke="#5a5d5f" stroke-width="1"/><line x1="750.5" y1="439" x2="750.5" y2="461" stroke="#5a5d5f" stroke-width="1"/><path d="M756,447.5 h8 l-4,5.5z" fill="#c8c8c8"/><rect x="784.5" y="436.5" width="90" height="29" rx="14.5" fill="#45494a" stroke="#5a5d5f" stroke-width="1"/><circle cx="791.8" cy="451" r="4" fill="none" stroke="#b8b8b8" stroke-width="2"/><line x1="794.6" y1="453.8" x2="799" y2="458.2" stroke="#b8b8b8" stroke-width="2.2"/><path d="M799.8,449.5 h5 l-2.5,3z" fill="#b8b8b8"/><rect x="72" y="433" width="1" height="36" fill="#2b2b2b"/><rect x="162.5" y="433" width="1" height="36" fill="#2b2b2b"/><rect x="230.5" y="433" width="1" height="36" fill="#2b2b2b"/><rect x="299" y="433" width="1" height="36" fill="#2b2b2b"/><rect x="390" y="433" width="1" height="36" fill="#2b2b2b"/><rect x="11" y="432" width="380" height="1" fill="#2b2b2b"/><rect x="16" y="446.50" width="3" height="1.25" fill="#e74c3c"/><rect x="16" y="447.70" width="3" height="1.25" fill="#f39c12"/><rect x="16" y="448.90" width="3" height="1.25" fill="#f1c40f"/><rect x="16" y="450.10" width="3" height="1.25" fill="#2ecc71"/><rect x="16" y="451.30" width="3" height="1.25" fill="#3498db"/><rect x="16" y="452.50" width="3" height="1.25" fill="#8e44ad"/><rect x="20" y="446" width="4.5" height="8" fill="#f48fd8"/><rect x="21" y="448" width="1.5" height="1.5" fill="#fbd0ef"/><rect x="22.5" y="450.5" width="1.5" height="1.5" fill="#e070c0"/><path d="M24.2,454 v-1.5 a3.9,3.6 0 0 1 7.8,0 v1.5z" fill="#98c03c"/><path d="M25,446 l2.2,3.2 M31.4,446 l-2.2,3.2" stroke="#98c03c" stroke-width="1.1"/><rect x="26.2" y="451" width="1.2" height="1.2" fill="#2b2b2b"/><rect x="28.9" y="451" width="1.2" height="1.2" fill="#2b2b2b"/><rect x="79" y="443" width="14" height="14" fill="#4a8ec8"/><path d="M79,443 h14 v4 l-2,2 l-1.5,-1 l-2,4 l-2,-3 l-2,1 l-1.5,-2 l-3,2z" fill="#c8dcea"/><rect x="169" y="443" width="14" height="14" fill="#d94a4a"/><path d="M169,443 h14 v4 l-2,2 l-1.5,-1 l-2,4 l-2,-3 l-2,1 l-1.5,-2 l-3,2z" fill="#f0b0b0"/><rect x="237" y="443" width="14" height="14" fill="#5b3aa0"/><path d="M237,443 h14 v4 l-2,2 l-1.5,-1 l-2,4 l-2,-3 l-2,1 l-1.5,-2 l-3,2z" fill="#a890d8"/><rect x="306" y="443" width="14" height="14" fill="#f08a1c"/><path d="M306,443 h14 v4 l-2,2 l-1.5,-1 l-2,4 l-2,-3 l-2,1 l-1.5,-2 l-3,2z" fill="#f6c890"/><path d="M148,450.5 h7 M152,447.5 l3,3 l-3,3" fill="none" stroke="#9a9a9a" stroke-width="1.2"/><rect x="157" y="446" width="2.5" height="2.5" fill="#9a9a9a"/><path d="M215.5,450.5 h7 M219.5,447.5 l3,3 l-3,3" fill="none" stroke="#9a9a9a" stroke-width="1.2"/><rect x="224.5" y="446" width="2.5" height="2.5" fill="#9a9a9a"/><path d="M285,450.5 h7 M289,447.5 l3,3 l-3,3" fill="none" stroke="#9a9a9a" stroke-width="1.2"/><rect x="294" y="446" width="2.5" height="2.5" fill="#9a9a9a"/><path d="M375,450.5 h7 M379,447.5 l3,3 l-3,3" fill="none" stroke="#9a9a9a" stroke-width="1.2"/><rect x="384" y="446" width="2.5" height="2.5" fill="#9a9a9a"/><rect x="0" y="442" width="3" height="9" fill="#8e8e8e"/><rect x="-1" y="463.5" width="3.5" height="14" fill="#9bc03a" stroke="#f0f0f0" stroke-width="1"/><rect x="0" y="488.5" width="4" height="11" fill="#8e8e8e"/><path d="M1,501 h5 l-2.5,2.5z" fill="#cccccc"/><rect x="1" y="512" width="1" height="1" fill="#8a8c8e"/><rect x="4" y="512" width="1" height="1" fill="#8a8c8e"/><rect x="7" y="512" width="1" height="1" fill="#8a8c8e"/><rect x="0" y="524.5" width="3" height="6" fill="#e05040"/><rect x="18.5" y="480" width="13" height="2" rx="1" fill="#9a9a9a"/><rect x="22.5" y="478.5" width="5" height="2" fill="#9a9a9a"/><path d="M19.5,483 h11 l-1,11 h-9z" fill="#4a9ad8"/><rect x="22" y="485" width="1" height="7" fill="#2b2b2b"/><rect x="24.5" y="485" width="1" height="7" fill="#2b2b2b"/><rect x="27" y="485" width="1" height="7" fill="#2b2b2b"/><rect x="29.5" y="485" width="1" height="7" fill="#2b2b2b"/><rect x="18.5" y="505.5" width="13" height="11" fill="none" stroke="#6a6a6a" stroke-width="1.2"/><path d="M20,516 L30,507 V516z" fill="#5a5a5a"/><path d="M27.5,503 v6 M24.5,506.5 l3,3.5 l3,-3.5" fill="none" stroke="#6e6e6e" stroke-width="2"/><path d="M25,531 l-6,6 h4 v4.5 h4 v-4.5 h4z" fill="#6a6a6a"/><path d="M25,569 l-6,-6 h4 v-4.5 h4 v4.5 h4z" fill="#6a6a6a"/><path d="M19,583 h10 M29,583 l-2,-2 M19,587.5 h10 M19,587.5 l2,2 M19,592 h10 M29,592 l-2,-2" fill="none" stroke="#4a9ad8" stroke-width="1.3"/><rect x="18.5" y="581" width="3" height="1" fill="#9a9a9a"/><rect x="18" y="609" width="14" height="6" fill="#4a9ad8"/><rect x="20.5" y="605.5" width="9" height="3.5" fill="#4a9ad8"/><rect x="20.5" y="613" width="9" height="5" fill="#e8e8e8"/><rect x="22" y="615" width="6" height="1" fill="#4a9ad8"/><rect x="13" y="628" width="1" height="1" fill="#6a6c6e"/><rect x="16" y="628" width="1" height="1" fill="#6a6c6e"/><rect x="19" y="628" width="1" height="1" fill="#6a6c6e"/><rect x="22" y="628" width="1" height="1" fill="#6a6c6e"/><rect x="25" y="628" width="1" height="1" fill="#6a6c6e"/><rect x="28" y="628" width="1" height="1" fill="#6a6c6e"/><rect x="31" y="628" width="1" height="1" fill="#6a6c6e"/><rect x="34" y="628" width="1" height="1" fill="#6a6c6e"/><rect x="37" y="628" width="1" height="1" fill="#6a6c6e"/><path d="M28,637.5 A6,6 0 1 0 24,649" fill="none" stroke="#3db54a" stroke-width="2.2"/><path d="M25.5,635 l4.5,0.5 l-2,4z" fill="#3db54a"/><rect x="24" y="642" width="8" height="8" fill="#9a9a9a"/><path d="M21.5,667 l3,3 l-3,3 M25.5,667 l3,3 l-3,3" fill="none" stroke="#9a9a9a" stroke-width="1.1"/></svg>
<div class="t" style="left:39px;top:408.99px;font-size:13px;line-height:13px;color:#bbbbbb;font-weight:normal;font-family:'Liberation Sans',sans-serif;">Unknown Google Nexus 5 - 5.1.0 - API 22 - 1080x1920 <span style="color:#8a8d8f">Android 5.1, API 22</span></div>
<div class="t" style="left:526px;top:408.99px;font-size:13px;line-height:13px;color:#bbbbbb;font-weight:normal;font-family:'Liberation Sans',sans-serif;">com.xie.acer1.<b>test</b> <span style="color:#8a8d8f">(11747)</span></div>
<div class="t" style="left:35.5px;top:444.49px;font-size:13px;line-height:13px;color:#bbbbbb;font-weight:normal;font-family:'Liberation Sans',sans-serif;transform:scaleX(0.94);transform-origin:0 0;">logcat</div>
<div class="t" style="left:97.7px;top:444.49px;font-size:13px;line-height:13px;color:#bbbbbb;font-weight:normal;font-family:'Liberation Sans',sans-serif;transform:scaleX(0.915);transform-origin:0 0;">Memory</div>
<div class="t" style="left:187px;top:444.49px;font-size:13px;line-height:13px;color:#bbbbbb;font-weight:normal;font-family:'Liberation Sans',sans-serif;transform:scaleX(0.78);transform-origin:0 0;">CPU</div>
<div class="t" style="left:255px;top:444.49px;font-size:13px;line-height:13px;color:#bbbbbb;font-weight:normal;font-family:'Liberation Sans',sans-serif;transform:scaleX(0.815);transform-origin:0 0;">GPU</div>
<div class="t" style="left:324.5px;top:444.49px;font-size:13px;line-height:13px;color:#bbbbbb;font-weight:normal;font-family:'Liberation Sans',sans-serif;transform:scaleX(0.935);transform-origin:0 0;">Network</div>
<div class="t" style="left:606.3px;top:443.99px;font-size:13px;line-height:13px;color:#bbbbbb;font-weight:normal;font-family:'Liberation Sans',sans-serif;">Log level:</div>
<div class="t" style="left:677px;top:442.99px;font-size:13px;line-height:13px;color:#bbbbbb;font-weight:normal;font-family:'Liberation Sans',sans-serif;">Verbose</div>
<div class="t" style="left:807px;top:443.59px;font-size:13px;line-height:13px;color:#bbbbbb;font-weight:normal;font-family:'Liberation Sans',sans-serif;">yaoyan</div>
<div class="t" style="left:48.5px;top:476.41px;font-size:12px;line-height:12px;font-family:'Liberation Mono',monospace;color:#a9b7c6;transform:scaleX(0.8333);transform-origin:0 0;color:#bbbbbb">01-23 09:32:06.653 11747-11747/com.xie.acer1.test I/yaoyan:    900  650</div>
<div class="t" style="left:48.5px;top:495.41px;font-size:12px;line-height:12px;font-family:'Liberation Mono',monospace;color:#a9b7c6;transform:scaleX(0.8333);transform-origin:0 0;color:#bbbbbb">01-23 09:32:06.671 11747-11747/com.xie.acer1.test I/yaoyan:    900  650</div>
<div class="t" style="left:48.5px;top:514.41px;font-size:12px;line-height:12px;font-family:'Liberation Mono',monospace;color:#a9b7c6;transform:scaleX(0.8333);transform-origin:0 0;color:#bbbbbb">01-23 09:32:06.796 11747-11747/com.xie.acer1.test I/yaoyan:    900  640</div>
<div class="t" style="left:48.5px;top:533.41px;font-size:12px;line-height:12px;font-family:'Liberation Mono',monospace;color:#a9b7c6;transform:scaleX(0.8333);transform-origin:0 0;color:#bbbbbb">01-23 09:32:06.810 11747-11747/com.xie.acer1.test I/yaoyan:    900  640</div>
<div class="t" style="left:48.5px;top:552.41px;font-size:12px;line-height:12px;font-family:'Liberation Mono',monospace;color:#a9b7c6;transform:scaleX(0.8333);transform-origin:0 0;color:#bbbbbb">01-23 09:32:07.074 11747-11747/com.xie.acer1.test I/yaoyan:    900  630</div>
<div class="t" style="left:48.5px;top:571.41px;font-size:12px;line-height:12px;font-family:'Liberation Mono',monospace;color:#a9b7c6;transform:scaleX(0.8333);transform-origin:0 0;color:#bbbbbb">01-23 09:32:07.088 11747-11747/com.xie.acer1.test I/yaoyan:    900  630</div>
<div class="t" style="left:48.5px;top:590.41px;font-size:12px;line-height:12px;font-family:'Liberation Mono',monospace;color:#a9b7c6;transform:scaleX(0.8333);transform-origin:0 0;color:#bbbbbb">01-23 09:32:07.190 11747-11747/com.xie.acer1.test I/yaoyan:    900  620</div>
<div class="t" style="left:48.5px;top:609.41px;font-size:12px;line-height:12px;font-family:'Liberation Mono',monospace;color:#a9b7c6;transform:scaleX(0.8333);transform-origin:0 0;color:#bbbbbb">01-23 09:32:07.208 11747-11747/com.xie.acer1.test I/yaoyan:    900  620</div>
<div class="t" style="left:48.5px;top:628.41px;font-size:12px;line-height:12px;font-family:'Liberation Mono',monospace;color:#a9b7c6;transform:scaleX(0.8333);transform-origin:0 0;color:#bbbbbb">01-23 09:32:07.333 11747-11747/com.xie.acer1.test I/yaoyan:    900  610</div>
<div class="t" style="left:48.5px;top:647.41px;font-size:12px;line-height:12px;font-family:'Liberation Mono',monospace;color:#a9b7c6;transform:scaleX(0.8333);transform-origin:0 0;color:#bbbbbb">01-23 09:32:07.351 11747-11747/com.xie.acer1.test I/yaoyan:    900  610</div>
<div class="a" style="left:850px;top:0px;width:382px;height:679px;background:#5ebac9;"></div>
<div class="a" style="left:858px;top:30px;width:374px;height:649px;background:#000;"></div>
<div class="a" style="left:850px;top:0px;width:1px;height:679px;background:#4d9ba7;"></div>
<div class="a" style="left:859px;top:30px;width:371px;height:26px;background:#303f9f;"></div>
<div class="a" style="left:859px;top:56px;width:371px;height:584px;background:#eeeeee;"></div>
<div class="a" style="left:859px;top:56px;width:309px;height:209px;background:#000;"></div>
<div class="a" style="left:1168px;top:56px;width:1px;height:209px;background:#f8f8f8;"></div>
<div class="a" style="left:859px;top:265px;width:310px;height:1px;background:#f8f8f8;"></div>
<div class="a" style="left:862px;top:596px;width:108px;height:38px;background:#d6d7d7;border-radius:2px;box-shadow:0 1px 1.5px rgba(0,0,0,.28)"></div>
<div class="t" style="left:871px;top:608.40px;font-size:13.7px;line-height:13.7px;color:#1e1e1e;font-weight:normal;font-family:'Liberation Sans',sans-serif;-webkit-text-stroke:0.45px #1e1e1e;transform:scaleX(0.975);transform-origin:0 0;">NEW BUTTON</div>
<div class="t" style="left:881px;top:7.25px;font-size:16px;line-height:16px;color:#1c2a30;font-weight:normal;font-family:'Liberation Sans',sans-serif;transform:scaleX(1.02);transform-origin:0 0;">Genymotion for personal use - Google ...</div>
<svg class="a" style="left:0;top:0" width="1232" height="679" viewBox="0 0 1232 679"><circle cx="867.8" cy="13.7" r="8" fill="#ffffff"/><circle cx="864.5" cy="14.5" r="2.4" fill="none" stroke="#e0457b" stroke-width="1.2"/><circle cx="871" cy="13.8" r="3.2" fill="none" stroke="#e0457b" stroke-width="1.2"/><rect x="1193" y="12.5" width="8" height="2" fill="#1a1a1a"/><rect x="1219.5" y="7" width="9" height="7" fill="none" stroke="#1a1a1a" stroke-width="1"/><rect x="1219" y="6.5" width="10" height="2" fill="#1a1a1a"/><path d="M1141.8,50 L1133,38.5 Q1141.8,32 1150.7,38.5 L1147,43.5z" fill="#ffffff"/><rect x="1148.2" y="44" width="1.5" height="4" fill="#fff"/><rect x="1148.2" y="49" width="1.5" height="1.2" fill="#fff"/><path d="M1153,50 L1165,36.3 V50z" fill="#8890cc"/><path d="M1153,50 L1161.5,40.5 V50z" fill="#ffffff"/><rect x="1165.8" y="43" width="1.5" height="5" fill="#fff"/><rect x="1165.8" y="49" width="1.5" height="1.2" fill="#fff"/><rect x="1178.5" y="35.3" width="5" height="2" fill="#8890cc"/><rect x="1176" y="37" width="10" height="6" fill="#8890cc"/><rect x="1176" y="43" width="10" height="7" fill="#ffffff"/><path d="M934,664.3 L948.5,656 V672.6z" fill="none" stroke="#ffffff" stroke-width="2" stroke-linejoin="round"/><circle cx="1044.2" cy="664" r="7.5" fill="none" stroke="#ffffff" stroke-width="2"/><rect x="1140.2" y="657.2" width="15" height="15" rx="1.5" fill="none" stroke="#ffffff" stroke-width="2"/></svg>
<div class="t" style="left:1193.7px;top:36.45px;font-size:14px;line-height:14px;color:#ffffff;font-weight:normal;font-family:'Liberation Sans',sans-serif;">9:32</div>
<div class="t" style="left:862px;top:668.65px;font-size:14px;line-height:14px;color:#303030;font-weight:normal;font-family:'Liberation Sans',sans-serif;">free for personal use</div>
</body></html>
